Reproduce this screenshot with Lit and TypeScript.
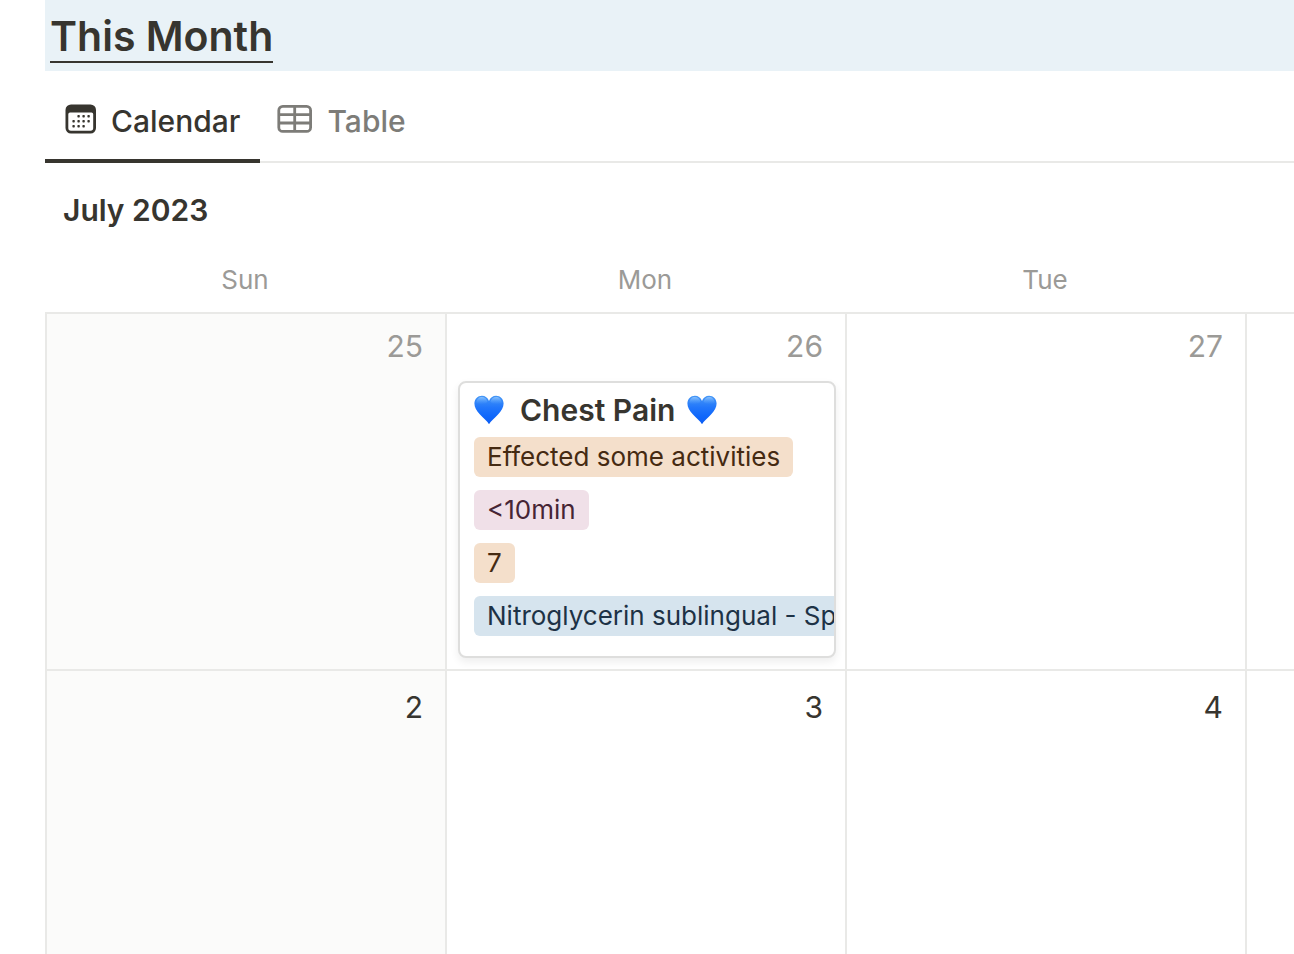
import { LitElement, html, svg, css, nothing } from "lit";
import { customElement, property, state } from "lit/decorators.js";
import { classMap } from "lit/directives/class-map.js";

interface Tag {
  text: string;
  tone: "orange" | "pink" | "blue";
}

interface Entry {
  title: string;
  tags: Tag[];
}

interface Day {
  label: string;
  muted?: boolean;
  entry?: Entry;
}

const WEEKDAYS = ["Sun", "Mon", "Tue", ""];

const WEEKS: Day[][] = [
  [
    { label: "25", muted: true },
    {
      label: "26",
      muted: true,
      entry: {
        title: "Chest Pain",
        tags: [
          { text: "Effected some activities", tone: "orange" },
          { text: "<10min", tone: "pink" },
          { text: "7", tone: "orange" },
          { text: "Nitroglycerin sublingual - Sp", tone: "blue" },
        ],
      },
    },
    { label: "27", muted: true },
    { label: "" },
  ],
  [{ label: "2" }, { label: "3" }, { label: "4" }, { label: "" }],
];

const DOTS = [
  [13, 11], [18, 11], [23, 11],
  [8, 16], [13, 16], [18, 16], [23, 16],
  [8, 21], [13, 21], [18, 21],
];

const calendarIcon = html`<svg width="32" height="30" viewBox="0 0 32 30" aria-hidden="true">
  <path
    fill="currentColor"
    fill-rule="evenodd"
    d="M6 .5h19.500a5.500 5.500 0 0 1 5.500 5.500v18a5.500 5.500 0 0 1-5.500 5.500H6A5.500 5.500 0 0 1 .5 24V6A5.500 5.500 0 0 1 6 .5zM5 8.500a1.700 1.700 0 0 0-1.700 1.700v13.800a2.700 2.700 0 0 0 2.700 2.700h19.500a2.700 2.700 0 0 0 2.700-2.700V10.200a1.700 1.700 0 0 0-1.700-1.700z"
  />
  ${DOTS.map(([x, y]) => svg`<rect x=${x - 0.6} y=${y} width="2.400" height="2.400" rx=".7" fill="currentColor" />`)}
</svg>`;

const tableIcon = html`<svg width="36" height="30" viewBox="0 0 36 30" aria-hidden="true">
  <g fill="none" stroke="currentColor" stroke-width="2.800">
    <rect x="1.800" y="2.400" width="31.800" height="25" rx="4" />
    <path d="M17.700 2.400v25M1.800 10.700h31.800M1.800 19h31.800" />
  </g>
</svg>`;

@customElement("blue-heart")
export class BlueHeart extends LitElement {
  static styles = css`
    :host {
      display: inline-flex;
    }
  `;

  render() {
    return html`<svg width="30" height="30" viewBox="0 0 30 30" role="img" aria-label="Blue heart">
      <defs>
        <linearGradient id="body" x1="0" y1="0" x2="0" y2="1">
          <stop offset="0" stop-color="#4798f6" />
          <stop offset=".4" stop-color="#2277fb" />
          <stop offset=".7" stop-color="#1068fb" />
          <stop offset="1" stop-color="#0b5cf4" />
        </linearGradient>
        <linearGradient id="gloss" x1="0" y1="0" x2="0" y2="1">
          <stop offset="0" stop-color="#9acbff" stop-opacity=".8" />
          <stop offset="1" stop-color="#5aa5ff" stop-opacity="0" />
        </linearGradient>
      </defs>
      <path
        fill="url(#body)"
        d="M15 29.300C13.500 26.500 9.500 23.200 6 19.500 2.500 15.800.4 12.500.4 8.600.4 4 3.700.8 7.900.8c3.300 0 6 2 7.100 5.200C16.100 2.800 18.800.8 22.100.8c4.200 0 7.500 3.200 7.500 7.800 0 3.900-2.100 7.200-5.600 10.900-3.500 3.700-7.500 7-9 9.800z"
      />
      <path fill="url(#gloss)" d="M2.300 7.500C2.700 4 5 2 7.900 2c2.700 0 4.900 1.800 5.600 4.700-1.500 2.600-9.700 3.600-11.200.8z" />
      <path fill="url(#gloss)" d="M27.700 7.500C27.300 4 25 2 22.100 2c-2.700 0-4.900 1.800-5.600 4.700 1.500 2.600 9.700 3.600 11.200.8z" />
    </svg>`;
  }
}

@customElement("entry-card")
export class EntryCard extends LitElement {
  @property({ attribute: false }) entry!: Entry;

  static styles = css`
    :host {
      display: block;
    }
    .card {
      display: flex;
      flex-direction: column;
      align-items: flex-start;
      gap: 13px;
      padding: 7px 14px 20px;
      overflow: hidden;
      border: 2px solid #dededd;
      border-radius: 8px;
      background: #fff;
      box-shadow: 0 4px 8px rgba(15, 15, 15, 0.07);
    }
    .title {
      display: flex;
      align-items: center;
      margin: 0 0 -6px;
      font-size: 30px;
      line-height: 40px;
      font-weight: 600;
      color: #37352f;
    }
    .name {
      margin: 0 12px 0 16px;
    }
    .tag {
      padding: 0 13px;
      border-radius: 6px;
      font-size: 26px;
      line-height: 40px;
      white-space: nowrap;
    }
    .orange {
      background: #f4dfcb;
      color: #452a12;
    }
    .pink {
      background: #f0e0e8;
      color: #462535;
    }
    .blue {
      background: #d6e4ee;
      color: #1d3246;
    }
  `;

  render() {
    return html`<article class="card">
      <h3 class="title">
        <blue-heart></blue-heart>
        <span class="name">${this.entry.title}</span>
        <blue-heart></blue-heart>
      </h3>
      ${this.entry.tags.map(
        (tag) => html`<span class=${classMap({ tag: true, [tag.tone]: true })}>${tag.text}</span>`,
      )}
    </article>`;
  }
}

@customElement("app-root")
export class AppRoot extends LitElement {
  @state() private view = "calendar";

  static styles = css`
    :host {
      display: block;
      height: 100vh;
      overflow: hidden;
      background: #fff;
      color: #37352f;
      font-family: Inter, "Liberation Sans", sans-serif;
    }
    .page {
      padding-left: 45px;
    }
    .heading {
      display: flex;
      margin: 0;
      padding: 12px 5px 8px;
      background: #e9f2f7;
      font-size: 41px;
      line-height: 49px;
      font-weight: 600;
    }
    .heading-text {
      border-bottom: 2px solid #37352f;
    }
    .tabs {
      display: flex;
      height: 90px;
      border-bottom: 2px solid #e9e9e7;
    }
    .tab {
      display: flex;
      align-items: center;
      gap: 14px;
      height: 92px;
      padding: 12px 20px 0;
      border: 0;
      border-bottom: 4px solid transparent;
      background: none;
      color: #7d7c78;
      font: 500 30px/40px Inter, "Liberation Sans", sans-serif;
      cursor: pointer;
    }
    .tab svg {
      margin-bottom: 4px;
    }
    .tab.active {
      border-color: #37352f;
      color: #37352f;
    }
    .tab + .tab {
      padding-left: 17px;
    }
    .month {
      margin: 0;
      padding: 27px 18px;
      font-size: 30px;
      line-height: 40px;
      font-weight: 600;
    }
    .calendar {
      width: 100%;
      table-layout: fixed;
      border-collapse: separate;
      border-spacing: 0;
    }
    .day-column {
      width: 400px;
    }
    .weekday {
      height: 57px;
      padding: 0 0 9px;
      box-sizing: border-box;
      border-bottom: 2px solid #e9e9e7;
      font-size: 26px;
      line-height: 32px;
      font-weight: 400;
      color: #9b9a97;
    }
    .day {
      height: 357px;
      box-sizing: border-box;
      padding: 12px 9px 11px 11px;
      vertical-align: top;
      border-left: 2px solid #e9e9e7;
      border-bottom: 2px solid #e9e9e7;
    }
    tr + tr .day {
      padding-top: 16px;
    }
    .day.weekend {
      background: #fbfbfa;
    }
    .date {
      display: block;
      margin-bottom: 15px;
      padding-right: 13px;
      font-size: 30px;
      line-height: 40px;
      text-align: right;
    }
    .date.muted {
      color: #9b9a97;
    }
  `;

  private tab(id: string, label: string, icon: unknown) {
    const active = this.view === id;
    return html`<button
      class=${classMap({ tab: true, active })}
      role="tab"
      aria-selected=${active ? "true" : "false"}
      @click=${() => (this.view = id)}
    >
      ${icon}<span>${label}</span>
    </button>`;
  }

  private day(day: Day, column: number) {
    return html`<td class=${classMap({ day: true, weekend: column === 0 })}>
      ${day.label
        ? html`<span class=${classMap({ date: true, muted: !!day.muted })}>${day.label}</span>`
        : nothing}
      ${day.entry ? html`<entry-card .entry=${day.entry}></entry-card>` : nothing}
    </td>`;
  }

  render() {
    return html`<main class="page">
      <h1 class="heading"><span class="heading-text">This Month</span></h1>
      <div class="tabs" role="tablist">
        ${this.tab("calendar", "Calendar", calendarIcon)} ${this.tab("table", "Table", tableIcon)}
      </div>
      <h2 class="month">July 2023</h2>
      <table class="calendar">
        <colgroup>
          <col class="day-column" />
          <col class="day-column" />
          <col class="day-column" />
          <col />
        </colgroup>
        <thead>
          <tr>
            ${WEEKDAYS.map((name) => html`<th class="weekday" scope="col">${name}</th>`)}
          </tr>
        </thead>
        <tbody>
          ${WEEKS.map((week) => html`<tr>${week.map((day, i) => this.day(day, i))}</tr>`)}
        </tbody>
      </table>
    </main>`;
  }
}
